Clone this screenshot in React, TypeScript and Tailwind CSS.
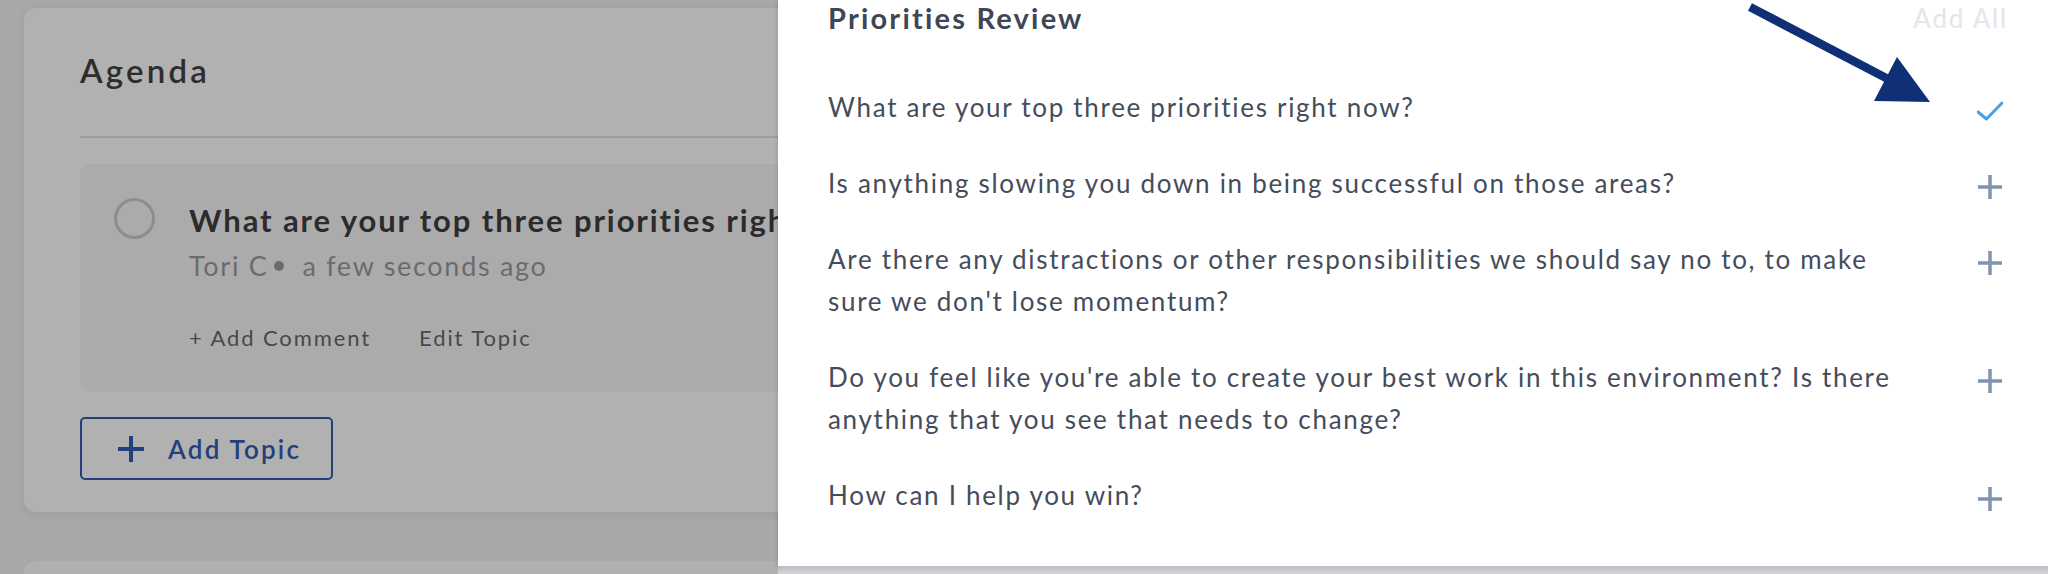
import React from 'react';

const questions = [
  { text: 'What are your top three priorities right now?', added: true },
  { text: 'Is anything slowing you down in being successful on those areas?', added: false },
  {
    text: "Are there any distractions or other responsibilities we should say no to, to make sure we don't lose momentum?",
    added: false,
  },
  {
    text: "Do you feel like you're able to create your best work in this environment? Is there anything that you see that needs to change?",
    added: false,
  },
  { text: 'How can I help you win?', added: false },
];

const CheckIcon = () => (
  <svg width="26" height="24" viewBox="0 0 26 24" fill="none">
    <path d="M1 13 L9.5 20 L25 4" stroke="#4a9fe8" strokeWidth="3" strokeLinecap="round" strokeLinejoin="round" />
  </svg>
);

const PlusIcon = () => (
  <svg width="26" height="24" viewBox="0 0 26 24" fill="none">
    <path d="M13 0 V24 M1 12 H25" stroke="#7f95ae" strokeWidth="3.5" />
  </svg>
);

const Arrow = () => (
  <svg className="absolute left-[1740px] top-0" width="200" height="110" viewBox="0 0 200 110" fill="none">
    <path d="M10 7 L148 79" stroke="#0f2f76" strokeWidth="8.5" />
    <polygon points="157,57 134,101 190,102" fill="#0f2f76" />
  </svg>
);

const AgendaCard: React.FC = () => (
  <div className="bg-[#b1b1b1] rounded-[12px] shadow-[0_2px_10px_rgba(0,0,0,0.08)] pl-[56px] pr-[40px] pt-[42px] pb-[32px]">
    <h2 className="text-[33px] leading-[40px] font-semibold text-[#2d2d2d] tracking-[3.2px]">Agenda</h2>
    <div className="mt-[46px] h-[2px] bg-[#9c9c9c]" />

    <div className="mt-[26px] bg-[#ababab] rounded-[10px] pt-[34px] pl-[34px] pb-[40px] flex gap-[34px]">
      <div className="w-[41px] h-[41px] rounded-full border-[3px] border-[#8d8d8d] shrink-0" />
      <div className="pt-[4px] min-w-0">
        <div className="text-[31px] leading-[36px] font-bold text-[#2b2b2b] whitespace-nowrap tracking-[1.9px]">
          What are your top three priorities right now?
        </div>
        <div className="mt-[11px] flex items-center text-[27px] leading-[34px] text-[#6b6b6b] tracking-[1.7px]">
          <span>Tori C</span>
          <span className="ml-[6px] w-[10px] h-[10px] rounded-full bg-[#6b6b6b]" />
          <span className="ml-[18px]">a few seconds ago</span>
        </div>
        <div className="mt-[41px] flex gap-[48px] text-[22px] leading-[28px] text-[#484848] tracking-[1.9px]">
          <span>+ Add Comment</span>
          <span>Edit Topic</span>
        </div>
      </div>
    </div>

    <button className="mt-[25px] w-[253px] h-[63px] border-2 border-[#233f7c] rounded-[5px] flex items-center pl-[36px] gap-[24px] text-[#233f7c]">
      <svg width="26" height="26" viewBox="0 0 26 26" fill="none">
        <path d="M13 0 V26 M0 13 H26" stroke="#233f7c" strokeWidth="4" />
      </svg>
      <span className="text-[26px] font-semibold leading-none tracking-[2.2px]">Add Topic</span>
    </button>
  </div>
);

const PrioritiesPanel: React.FC = () => (
  <div className="absolute left-[778px] top-0 w-[1270px] h-[574px]">
    <div className="h-[566px] bg-white shadow-[0_1px_4px_rgba(0,0,0,0.2)] pl-[50px] pr-[40px]">
      <div className="flex items-start justify-between pt-[1px]">
        <h3 className="text-[29px] leading-[34px] font-bold text-[#3f4656] tracking-[2.2px]">Priorities Review</h3>
        <span className="text-[26px] leading-[34px] text-[#e3e6eb] tracking-[1.8px]">Add All</span>
      </div>
      <ul className="mt-[51px] flex flex-col gap-y-[34px]">
        {questions.map((q) => (
          <li key={q.text} className="flex items-start justify-between">
            <p className="w-[1080px] text-[26px] leading-[42px] text-[#454c5b] tracking-[1.7px]">{q.text}</p>
            <div className="mt-[12.5px] mr-[5px]">{q.added ? <CheckIcon /> : <PlusIcon />}</div>
          </li>
        ))}
      </ul>
    </div>
    <div className="h-[8px] bg-linear-to-b from-[#bcbdc0] to-[#d3d4d7]" />
  </div>
);

export default function App() {
  return (
    <div className="relative w-[2048px] h-[574px] overflow-hidden bg-[#a8a8a8] font-['Lato',sans-serif]">
      <div className="pl-[24px] pr-[24px] pt-[8px] flex flex-col gap-[49px]">
        <AgendaCard />
        <div className="h-[60px] bg-[#b0b0b0] rounded-[12px]" />
      </div>
      <PrioritiesPanel />
      <Arrow />
    </div>
  );
}
